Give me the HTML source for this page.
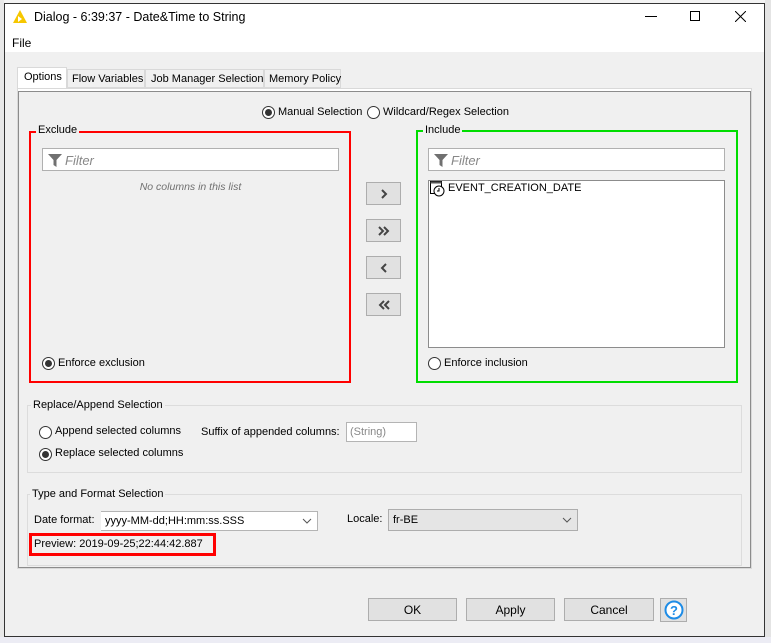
<!DOCTYPE html>
<html><head><meta charset="utf-8"><style>
*{box-sizing:border-box;margin:0;padding:0}
body{width:771px;height:643px;background:#f3f3f3;position:relative;overflow:hidden;font-family:"Liberation Sans",sans-serif;font-size:11px;color:#000;white-space:nowrap}
.a{position:absolute}
.win{left:4px;top:3px;width:761px;height:634px;background:#f0f0f0;border:1px solid #333}
.btn{position:absolute;background:#e1e1e1;border:1px solid #adadad;text-align:center;font-size:12px}
.radio{position:absolute;width:13px;height:13px;border:1px solid #333;border-radius:50%;background:#fff}
.radio.on::after{content:"";position:absolute;left:2px;top:2px;width:7px;height:7px;border-radius:50%;background:#333}
.grp{position:absolute;border:1px solid #dcdcdc}
.lbl{position:absolute;background:#f0f0f0;padding:0 2px}
.filt{position:absolute;height:23px;background:#fff;border:1px solid #b0b0b0;color:#888;font-style:italic;font-size:13px;padding:4px 0 0 22px}
.filt svg{position:absolute;left:5px;top:4px}
.tab{position:absolute;top:69px;height:19px;background:#f0f0f0;border:1px solid #d9d9d9;padding:3px 0 0 4px}
</style></head><body>
<div class="a" style="left:0;top:0;width:4px;height:643px;background:#e8e8e8"></div>
<div class="a" style="left:765px;top:0;width:6px;height:643px;background:#e4e4e4"></div>
<div class="a" style="left:0;top:637px;width:771px;height:6px;background:#ececf4"></div>
<div class="a win">
 <div class="a" style="left:0;top:0;width:759px;height:48px;background:#fff"></div>
</div>
<svg class="a" style="left:12px;top:9px" width="16" height="15" viewBox="0 0 16 15"><polygon points="8,1 15,14 1,14" fill="#f6c700"/><polygon points="6,7 10,10 6,13" fill="#fff"/></svg>
<div class="a" style="left:34px;top:10px;font-size:12.5px">Dialog - 6:39:37 - Date&amp;Time to String</div>
<div class="a" style="left:645px;top:16px;width:12px;height:1px;background:#000"></div>
<div class="a" style="left:690px;top:11px;width:10px;height:10px;border:1px solid #000"></div>
<svg class="a" style="left:735px;top:11px" width="11" height="11"><path d="M0 0L11 11M11 0L0 11" stroke="#000" stroke-width="1"/></svg>
<div class="a" style="left:12px;top:36px;font-size:12px">File</div>

<!-- tabs -->
<div class="a" style="left:17px;top:67px;width:50px;height:22px;background:#fff;border:1px solid #d9d9d9;border-bottom:none;padding:3px 0 0 6px">Options</div>
<div class="tab" style="left:67px;width:78px">Flow Variables</div>
<div class="tab" style="left:145px;width:119px;padding-left:5px">Job Manager Selection</div>
<div class="tab" style="left:264px;width:77px">Memory Policy</div>
<div class="a" style="left:17px;top:88px;width:735px;height:481px;border:1px solid #d9d9d9;background:#fff"></div>
<div class="a" style="left:18px;top:91px;width:733px;height:477px;border:1px solid #8c8c8c;background:#f0f0f0"></div>

<div class="radio on" style="left:262px;top:106px"></div>
<div class="a" style="left:278px;top:106px">Manual Selection</div>
<div class="radio" style="left:367px;top:106px"></div>
<div class="a" style="left:383px;top:106px">Wildcard/Regex Selection</div>

<!-- exclude -->
<div class="a" style="left:29px;top:131px;width:322px;height:252px;border:2px solid #ff0000"></div>
<div class="lbl" style="left:36px;top:124px">Exclude</div>
<div class="filt" style="left:42px;top:148px;width:297px"><svg width="14" height="15"><path d="M0 1H14L8.5 7V14L5.5 12V7Z" fill="#707070"/></svg>Filter</div>
<div class="a" style="left:42px;top:181px;width:297px;text-align:center;color:#707070;font-style:italic;font-size:10.5px">No columns in this list</div>
<div class="radio on" style="left:42px;top:357px"></div>
<div class="a" style="left:58px;top:357px">Enforce exclusion</div>

<!-- move buttons -->
<div class="btn" style="left:366px;top:182px;width:35px;height:23px"><svg width="12" height="12" style="margin-top:5px"><path d="M4 2L8 6L4 10" stroke="#444" stroke-width="2" fill="none"/></svg></div>
<div class="btn" style="left:366px;top:219px;width:35px;height:23px"><svg width="14" height="12" style="margin-top:5px"><path d="M2 2L6 6L2 10M7 2L11 6L7 10" stroke="#444" stroke-width="2" fill="none"/></svg></div>
<div class="btn" style="left:366px;top:256px;width:35px;height:23px"><svg width="12" height="12" style="margin-top:5px"><path d="M8 2L4 6L8 10" stroke="#444" stroke-width="2" fill="none"/></svg></div>
<div class="btn" style="left:366px;top:293px;width:35px;height:23px"><svg width="14" height="12" style="margin-top:5px"><path d="M7 2L3 6L7 10M12 2L8 6L12 10" stroke="#444" stroke-width="2" fill="none"/></svg></div>

<!-- include -->
<div class="a" style="left:416px;top:130px;width:322px;height:253px;border:2px solid #00dd00"></div>
<div class="lbl" style="left:423px;top:124px">Include</div>
<div class="filt" style="left:428px;top:148px;width:297px"><svg width="14" height="15"><path d="M0 1H14L8.5 7V14L5.5 12V7Z" fill="#707070"/></svg>Filter</div>
<div class="a" style="left:428px;top:180px;width:297px;height:168px;background:#fff;border:1px solid #8c8c8c"></div>
<svg class="a" style="left:430px;top:181px" width="16" height="16"><rect x="0.5" y="0.5" width="11" height="12" fill="#fff" stroke="#000"/><rect x="0.5" y="0.5" width="11" height="2" fill="#555"/><circle cx="9" cy="10" r="5" fill="#fff" stroke="#000"/><path d="M9 7V10H7" stroke="#000" fill="none"/></svg>
<div class="a" style="left:448px;top:182px">EVENT_CREATION_DATE</div>
<div class="radio" style="left:428px;top:357px"></div>
<div class="a" style="left:444px;top:357px">Enforce inclusion</div>

<!-- replace/append -->
<div class="grp" style="left:27px;top:405px;width:715px;height:68px"></div>
<div class="lbl" style="left:31px;top:399px">Replace/Append Selection</div>
<div class="radio" style="left:39px;top:426px"></div>
<div class="a" style="left:55px;top:425px">Append selected columns</div>
<div class="radio on" style="left:39px;top:448px"></div>
<div class="a" style="left:55px;top:447px">Replace selected columns</div>
<div class="a" style="left:201px;top:426px">Suffix of appended columns:</div>
<div class="a" style="left:346px;top:422px;width:71px;height:20px;background:#fff;border:1px solid #b4b4b4;color:#888;padding:3px 0 0 3px">(String)</div>

<!-- type/format -->
<div class="grp" style="left:27px;top:494px;width:715px;height:72px"></div>
<div class="lbl" style="left:30px;top:488px">Type and Format Selection</div>
<div class="a" style="left:34px;top:514px">Date format:</div>
<div class="a" style="left:101px;top:511px;width:217px;height:20px;background:#fff;border:1px solid #b4b4b4;border-left:none;padding:3px 0 0 4px">yyyy-MM-dd;HH:mm:ss.SSS</div>
<svg class="a" style="left:302px;top:518px" width="10" height="7"><path d="M1 1L5 5L9 1" stroke="#555" fill="none"/></svg>
<div class="a" style="left:347px;top:513px">Locale:</div>
<div class="a" style="left:388px;top:509px;width:190px;height:22px;background:#e5e5e5;border:1px solid #adadad;padding:4px 0 0 4px">fr-BE</div>
<svg class="a" style="left:562px;top:517px" width="10" height="7"><path d="M1 1L5 5L9 1" stroke="#555" fill="none"/></svg>
<div class="a" style="left:29px;top:533px;width:187px;height:23px;border:3px solid #ff0000"></div>
<div class="a" style="left:34px;top:538px">Preview: 2019-09-25;22:44:42.887</div>

<!-- bottom buttons -->
<div class="btn" style="left:368px;top:598px;width:89px;height:23px;padding-top:4px">OK</div>
<div class="btn" style="left:466px;top:598px;width:89px;height:23px;padding-top:4px">Apply</div>
<div class="btn" style="left:564px;top:598px;width:90px;height:23px;padding-top:4px">Cancel</div>
<div class="btn" style="left:660px;top:598px;width:27px;height:24px"></div>
<svg class="a" style="left:664px;top:600px" width="20" height="20"><circle cx="10" cy="10" r="8.5" fill="#fff" stroke="#1e8ce6" stroke-width="2"/><text x="10" y="15" text-anchor="middle" font-family="Liberation Sans" font-weight="bold" font-size="13" fill="#1e8ce6">?</text></svg>
</body></html>
